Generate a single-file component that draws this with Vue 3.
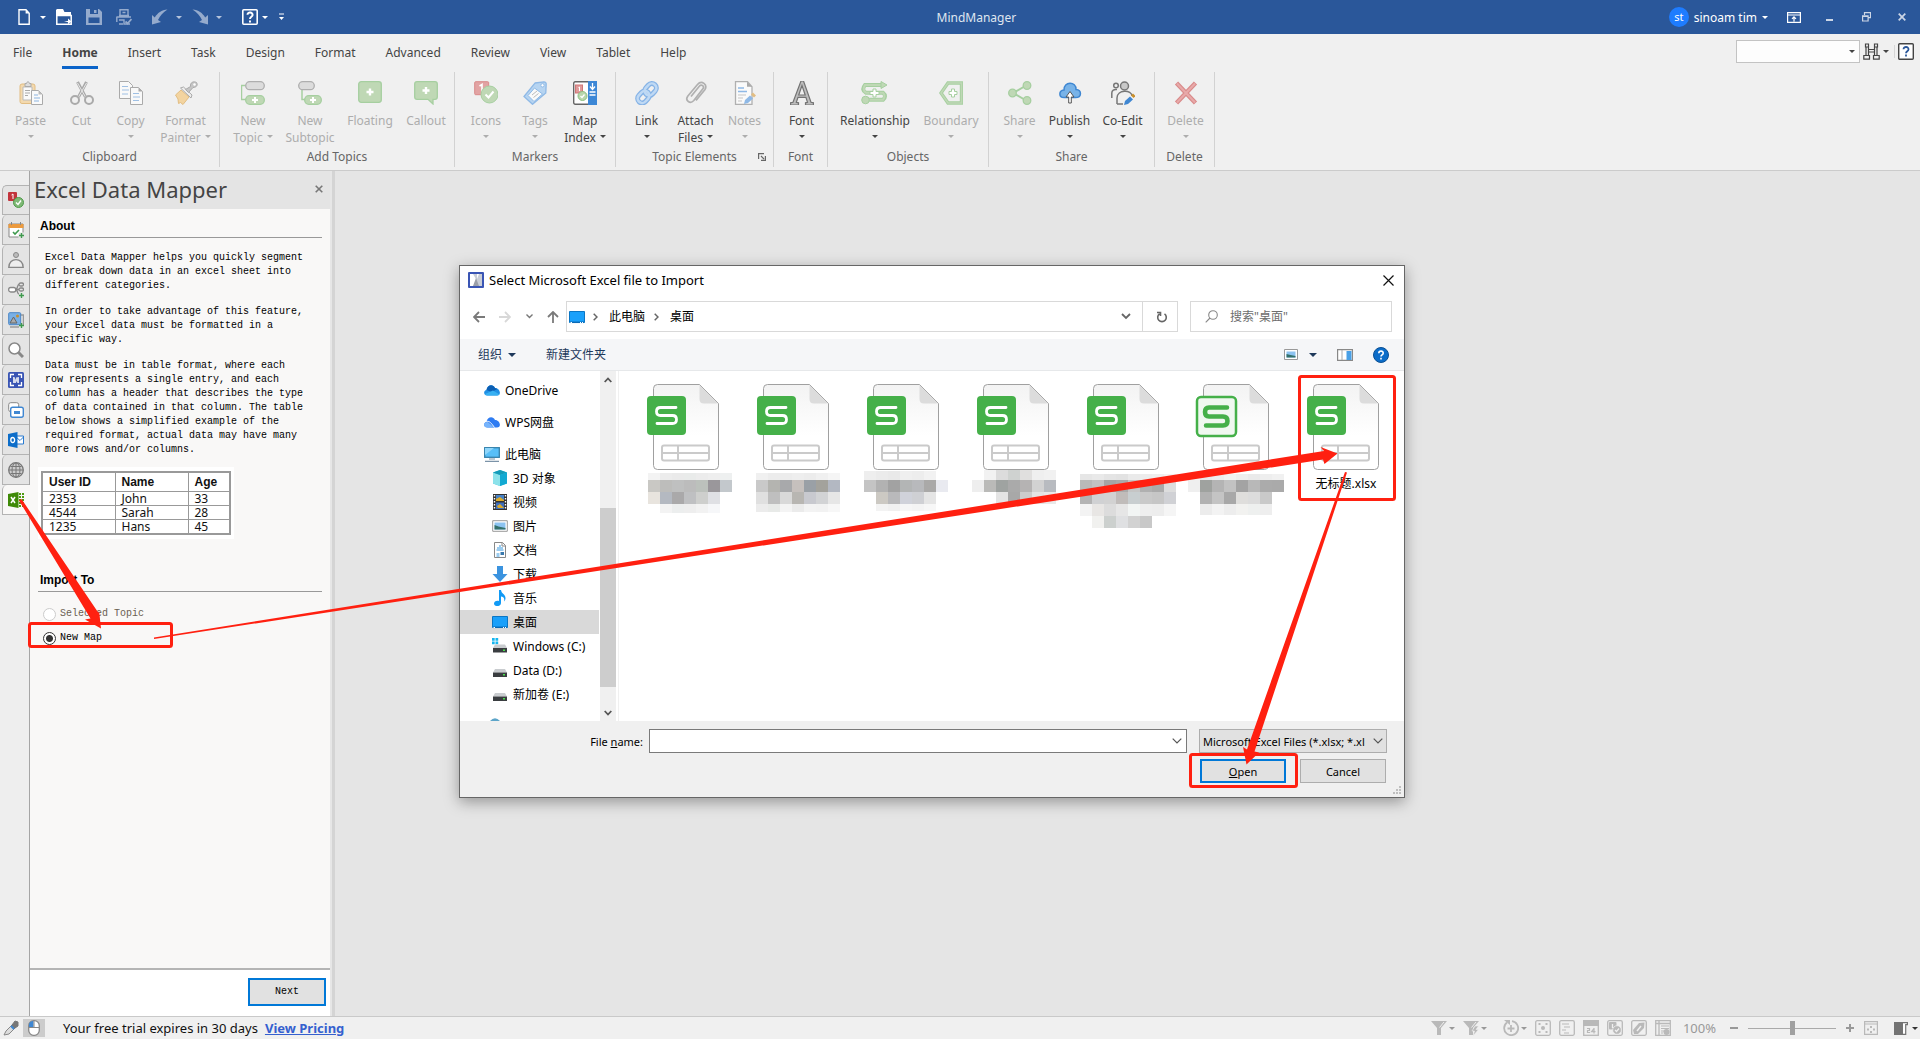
<script setup>
import { ref } from 'vue'

const icons = {
  newDoc: '<path d="M3 .8h7l3.2 3.4v11H3z" fill="none" stroke="#fff" stroke-width="1.4"/><path d="M9.6 1v3.6h3.6" fill="#fff"/>',
  folder: '<path d="M1 0h6l1.500 3H15v4H0V1z" fill="#fff"/><path d="M.8 6.500h14.400v8.700H.8z" fill="none" stroke="#fff" stroke-width="1.500"/><path d="M8 12h4V9.500l3.500 2.900-3.500 2.900v-2z" fill="#fff"/>',
  save: '<path d="M0 0h13l3 3v13H0z" fill="#95abcd"/><path d="M4 0h8v5H4zM2.500 8.500h11V14h-11z" fill="#2a579a"/><path d="M8 1h2.500v3H8z" fill="#95abcd"/>',
  print: '<g fill="none" stroke="#95abcd" stroke-width="1.400"><path d="M4 6V.8h8V6M6.500 3.500h3M1 8h14M3 6.500h10M.8 13V7.500M3 11h5v4h6M3 15h4"/><path d="M9.500 12.500l2 2 4-4.500" stroke-width="1.800"/></g>',
  undo: '<path d="M0 15.500V6l2.800 2.400C5.500 4 9.500 1 15.500.5 11 3.500 8 6.800 6 11l3 2z" fill="#95abcd"/>',
  redo: '<path d="M16 15.500V6l-2.800 2.400C10.500 4 6.500 1 .5.5 5 3.500 8 6.800 10 11l-3 2z" fill="#95abcd"/>',
  help: '<rect x=".8" y=".8" width="14.400" height="14.400" rx="1" fill="none" stroke="#fff" stroke-width="1.600"/><path d="M5.500 5.800C5.600 2.600 10.800 2.800 10.600 6c-.1 1.900-2.600 1.800-2.600 4M8 11.400v2" fill="none" stroke="#fff" stroke-width="2"/>',
  paste: '<rect x="1" y="3" width="15" height="19.500" rx="2" fill="#f3d9ae" stroke="#e2bd82"/><path d="M4 6h9v13H4z" fill="#fafafa" stroke="#bbb"/><path d="M6 2.500h1.500C8 .2 10 .2 10.500 2.500H12v3H6z" fill="#ddd" stroke="#aaa"/><path d="M6 9.500h5M6 12h5M6 14.500h3" stroke="#aaa"/><path d="M12.500 9.500h7l4 4v10h-11z" fill="#fafafa" stroke="#aaa"/><path d="M15 14h4M15 17h6M15 20h5" stroke="#8db5e0"/><path d="M19.500 9.500v4h4z" fill="#bbb"/>',
  cut: '<path d="M7.500 1l8 15M16.500 1l-8 15" stroke="#a9a9a9" stroke-width="3"/><path d="M7.500 2l8 14M16.500 2l-8 14" stroke="#e6e6e6"/><circle cx="5" cy="19" r="4" fill="none" stroke="#aaa" stroke-width="2"/><circle cx="19" cy="19" r="4" fill="none" stroke="#aaa" stroke-width="2"/>',
  copy: '<path d="M.5.5h9l4 4v13H.5z" fill="#f9f9f9" stroke="#aaa"/><path d="M3 5.500h6M3 9h7M3 13h6" stroke="#9fc0e4"/><path d="M11.500 6.500h8l4 4v13h-12z" fill="#f9f9f9" stroke="#aaa"/><path d="M14 12.500h6M14 16h7M14 19.500h6" stroke="#9fc0e4"/><path d="M19.500 6.500v4h4z" fill="#aaa"/>',
  painter: '<path d="M1.500 14L7 9l8 7-6 7.500-2.500-2-2 1L4 18z" fill="#f3d4a0" stroke="#e2bd82"/><path d="M6.500 7l3-1 8.500 8-1 3z" fill="#eee" stroke="#aaa"/><path d="M11.500 8.500l5-3C16 1 20 0 22.500 1.500c1.500 2 .5 5-3.500 5l-4.500 5z" fill="#c5c5c5" stroke="#aaa"/><circle cx="20.500" cy="3.500" r="1.200" fill="#fff"/>',
  newTopic: '<path d="M4.500 4.500h-4v14h5" fill="none" stroke="#a6cfa0" stroke-width="1.500"/><rect x="4.700" y=".7" width="18.600" height="8" rx="4" fill="#dcdcdc" stroke="#aeaeae" stroke-width="1.300"/><rect x="4.700" y="14.700" width="18.600" height="8.600" rx="4" fill="#bfd8b5" stroke="#a6cfa0" stroke-width="1.300"/><path d="M14 16v6M11 19h6" stroke="#fff" stroke-width="2"/>',
  subTopic: '<path d="M4 8v10.500h4" fill="none" stroke="#a6cfa0" stroke-width="1.500"/><rect x=".7" y=".7" width="15.600" height="8" rx="4" fill="#dcdcdc" stroke="#aeaeae" stroke-width="1.300"/><rect x="6.700" y="14.700" width="16.600" height="8.600" rx="4" fill="#bfd8b5" stroke="#a6cfa0" stroke-width="1.300"/><path d="M15 16v6M12 19h6" stroke="#fff" stroke-width="2"/>',
  floating: '<rect x=".7" y=".7" width="22.600" height="20.600" rx="2.500" fill="#bfd8b5" stroke="#a6cfa0" stroke-width="1.300"/><path d="M12 7.500v7M8.500 11h7" stroke="#fff" stroke-width="2.400"/>',
  callout: '<path d="M3 .7h18q2.300 0 2.300 2.300v13q0 2.300-2.300 2.300h-2V23l-5-4.700H3Q.7 18.300.7 16V3Q.7.700 3 .7z" fill="#bfd8b5" stroke="#a6cfa0" stroke-width="1.300"/><path d="M12 6v7M8.500 9.500h7" stroke="#fff" stroke-width="2.400"/>',
  iconsI: '<rect x=".7" y=".7" width="14" height="13" rx="1" fill="#e2a3a3" stroke="#d98b8b"/><path d="M5.500 5l2.500-1.500V11" fill="none" stroke="#fff" stroke-width="1.600"/><circle cx="15.500" cy="13.500" r="8.500" fill="#bfd8b5" stroke="#a6cfa0"/><path d="M11.500 13.500l3 3 5-6" fill="none" stroke="#fff" stroke-width="2"/>',
  tags: '<path d="M12 2L21 .8q2 0 2.200 2L22.800 12 9.500 23.300 1 15.500z" fill="#b6d4f1" stroke="#8fb9e6" stroke-width="1.300"/><path d="M11.500 7l8 6-8.500 7.500L5 14.500z" fill="#fafafa" stroke="#8fb9e6"/><circle cx="19.500" cy="4.300" r="1.700" fill="#fff" stroke="#8fb9e6"/><path d="M9 14l5-4M10.500 16.500l5-4" stroke="#bbb"/>',
  mapIndex: '<rect x=".7" y=".7" width="22.600" height="22.600" rx="1.500" fill="#fff" stroke="#666" stroke-width="1.400"/><path d="M15 0h9v24h-9z" fill="#3c87d6"/><path d="M19.500 2v6M17 5.500l2.500 3 2.500-3M16.500 11h6M16.500 14h6" fill="none" stroke="#fff" stroke-width="1.300"/><rect x="2.500" y="4" width="7" height="8" fill="#e09a9a" stroke="#cf7777"/><path d="M5.500 6.500L6.500 6v4" fill="none" stroke="#fff"/><circle cx="9.500" cy="15" r="4.500" fill="#b9d6ad" stroke="#8dc083"/><path d="M7.500 15l1.500 1.500 2.500-3" fill="none" stroke="#fff" stroke-width="1.300"/>',
  link: '<g fill="none" stroke="#86b3e6" stroke-width="5"><rect x="11" y="2" width="9" height="13" rx="4.500" transform="rotate(42 15.500 8.500)"/><rect x="4" y="9.500" width="9" height="13" rx="4.500" transform="rotate(42 8.500 16)"/></g><g fill="none" stroke="#bfd9f4" stroke-width="2.600"><rect x="11" y="2" width="9" height="13" rx="4.500" transform="rotate(42 15.500 8.500)"/><rect x="4" y="9.500" width="9" height="13" rx="4.500" transform="rotate(42 8.500 16)"/></g>',
  attach: '<path d="M7 15.500L15.500 5c2-2.300 5.200.3 3.400 2.700L9.800 19.500c-3.600 4-9 .2-6.100-4.300L13.500 3.500c4.200-4.800 10.500.2 7.300 5.200L12 19.500" fill="none" stroke="#b0b0b0" stroke-width="1.700"/>',
  notes: '<path d="M2.500.7h12l4.500 5v17.600H2.500z" fill="#fafafa" stroke="#b0b0b0" stroke-width="1.300"/><path d="M14 .7v5h5z" fill="#aaa"/><path d="M5 7h6M5 10.500h9" stroke="#8fb9e6" stroke-width="1.300"/><path d="M5 14h8M5 17h5M5 20h4" stroke="#c5c5c5"/><path d="M11 23l1-4 5-4.500 3 3-5 4.500z" fill="#8fb9e6"/><path d="M18 13.500l2-2 3 3-2 2z" fill="#e2bd82"/>',
  font: '<path d="M11 0h2.500l7.500 21.300 2.500.5V24h-8v-2.200l2-.5-1.600-5H8l-1.700 5 2.200.5V24H.5v-2.200l2.500-.5zm1 4.500L8.700 14h6.500z" fill="#bdbdbd" stroke="#737373" stroke-width="1.200"/>',
  relation: '<path d="M3 18.800h19q4-3.800 0-7H5Q0 9 4 4h18" fill="none" stroke="#a6cfa0" stroke-width="4"/><path d="M5 18.800h17q3-3.800 0-7H5Q1 9 4 4h18" fill="none" stroke="#bfd8b5" stroke-width="2"/><path d="M20 .5l6 3.500-6 3.500z" fill="#bfd8b5" stroke="#a6cfa0"/><circle cx="4.500" cy="19" r="3.800" fill="#bfd8b5" stroke="#a6cfa0"/><path d="M12 8h3v2.500h3v3h-3V16h-3v-2.500H9v-3h3z" fill="#fff" stroke="#a6cfa0"/>',
  boundary: '<path d="M9 2h13.500v20H9L2 12z" fill="none" stroke="#a6cfa0" stroke-width="3.400"/><path d="M9 2h13.500v20H9L2 12z" fill="none" stroke="#bfd8b5" stroke-width="1.500"/><path d="M12.500 8h3v2.500H18v3h-2.500V16h-3v-2.500H10v-3h2.500z" fill="#fff" stroke="#a6cfa0"/>',
  share: '<path d="M5 12L19 4M5 12l14 8" stroke="#a6cfa0" stroke-width="2"/><g fill="#bfd8b5" stroke="#a6cfa0" stroke-width="1.300"><circle cx="4.500" cy="12" r="3.800"/><circle cx="19" cy="4.500" r="3.800"/><circle cx="19" cy="19.500" r="3.800"/></g>',
  publish: '<path d="M6 16.500C.5 16.500.5 9.500 6 9 5.500 0 18.500 0 18 8.500c6 .5 6 8-.5 8z" fill="#78b3e8" stroke="#3f87d2" stroke-width="1.500"/><path d="M10.700 22v-6H8l4-5.500 4 5.500h-2.700v6z" fill="#fff" stroke="#555"/>',
  coedit: '<g fill="none" stroke="#777" stroke-width="1.500"><circle cx="5" cy="4.500" r="2.300"/><path d="M.8 17V12C.8 9.500 3 8 6 8.500M6 23v-6c0-9 15-8.500 15-2M6 23h6"/><circle cx="13.500" cy="5" r="4" fill="#c9c9c9"/></g><path d="M13 24l1-4 5-4.500 3 3-5 4.500z" fill="#3f87d2"/><path d="M20 14.500l2-2 2.500 2.500-2 2z" fill="#c98f2c"/>',
  del: '<path d="M2.500 2l19 20M21.500 2l-19 20" stroke="#d98b8b" stroke-width="4.500"/><path d="M3 2.500l18 19M21 2.500l-18 19" stroke="#e8a9a9" stroke-width="2"/>',
  sIcons: '<rect width="9" height="9" rx="1" fill="#c2343c"/><path d="M3.500 3L5 2v5" fill="none" stroke="#fff"/><circle cx="10.500" cy="10.500" r="5" fill="#7fb976" stroke="#4e9a4a"/><path d="M8 10.500l2 2 3-4" fill="none" stroke="#fff" stroke-width="1.400"/>',
  sTask: '<path d="M1 2h14v13H1z" fill="#fff" stroke="#888"/><path d="M.5 2h15v4H.5z" fill="#ec9b3f"/><path d="M3.500 0v3M12.500 0v3" stroke="#888"/><path d="M5 10l2 2 4-4" fill="none" stroke="#3f9a4e" stroke-width="1.600"/><path d="M10.500 10.500H16V16h-5.500z" fill="#e4e4e4"/><path d="M13.500 11v5M11 13.500h5" stroke="#3f9a4e" stroke-width="1.400"/>',
  sPerson: '<circle cx="8" cy="3" r="2.500" fill="#bbb" stroke="#888"/><path d="M.8 15.500C.8 5 15.200 5 15.200 15.500z" fill="#eee" stroke="#888" stroke-width="1.400"/>',
  sMap: '<g fill="none" stroke="#888" stroke-width="1.300"><rect x=".7" y="5.500" width="7" height="4.500" rx="2" fill="#fff"/><path d="M8 7.500h3M8 7c2 0 1-4.500 3-4.500M8 8c2 0 1 4 3 4"/><rect x="11" y="1" width="4.500" height="3" rx="1.500"/><rect x="11" y="6" width="4.500" height="3" rx="1.500"/></g><path d="M13.500 11v5M11 13.500h5" stroke="#3f9a4e" stroke-width="1.400"/>',
  sImage: '<path d="M3 3h12.500v10M2 15h9" fill="none" stroke="#999" stroke-width="1.500"/><rect x=".7" y=".7" width="12" height="12" rx="1" fill="#79b0e6" stroke="#4b86c6"/><path d="M2 11l3.500-6L9 11z" fill="#aaa" stroke="#666"/><circle cx="9.500" cy="4" r="1.500" fill="#c98f2c"/><path d="M13.500 11v5M11 13.500h5" stroke="#3f9a4e" stroke-width="1.400"/>',
  sSearch: '<path d="M10 10l5 5" stroke="#888" stroke-width="3"/><circle cx="6.500" cy="6.500" r="5.500" fill="#fff" stroke="#888" stroke-width="1.500"/>',
  sSnap: '<rect width="16" height="16" rx="1.500" fill="#3a55b4"/><path d="M2.500 6V2.500H6M10 2.500h3.500V6M13.500 10v3.500H10M6 13.500H2.500V10" fill="none" stroke="#fff" stroke-width="1.300"/><path d="M5 5h1.500L8 8V5.500L11 5v6H9.500L8 9v2H5z" fill="#d5daea"/>',
  sLib: '<rect x=".7" y=".7" width="10" height="9" rx="2" fill="#fff" stroke="#888"/><rect x="2.700" y="5.200" width="12.600" height="10" rx="2" fill="#fff" stroke="#3f87d2" stroke-width="1.400"/><path d="M6 9h6v3H6z" fill="#3f87d2"/>',
  sOutlook: '<path d="M8 4h7.500v8H8z" fill="#fff" stroke="#2a7bd0"/><path d="M8 5l4 3.500L15.500 5" fill="none" stroke="#2a7bd0"/><path d="M0 2l9.500-2v16L0 14z" fill="#0c6dc9"/><ellipse cx="4.700" cy="8" rx="1.900" ry="2.500" fill="none" stroke="#fff" stroke-width="1.300"/>',
  sWeb: '<circle cx="8" cy="8" r="7.300" fill="#ccc" stroke="#777" stroke-width="1.300"/><path d="M8 1v14M1 8h14M2.500 4.500h11M2.500 11.500h11" stroke="#777"/><ellipse cx="8" cy="8" rx="4" ry="7" fill="none" stroke="#777"/>',
  sExcel: '<path d="M11 2h5M11 5h5M11 8h5M11 11h5M11 14h5" stroke="#4f9a12" stroke-width="2" stroke-dasharray="2 1"/><path d="M0 2l10.500-2v16L0 14z" fill="#3f8a08"/><path d="M3 5l4 6M7 5l-4 6" stroke="#fff" stroke-width="1.500"/>',
  cloud: '<path d="M3.500 13.500C-.8 13.500-.8 8.500 2.500 8 3 3 9 1.500 11 6c5 0 7 7.500 2 7.500z" fill="#1f8fe4"/><path d="M2.500 8C3 3 9 1.500 11 6l2.500 1-6 3z" fill="#0b5fb4"/><path d="M1 12l8-3.500 6.500 4q-1 1-2.500 1H3.500Q1.500 13.500 1 12z" fill="#37b0f2"/>',
  wps: '<path d="M3.500 13.500C-.8 13.500-.8 8.500 2.500 8 3 3 9 1.500 11 6c5 0 7 7.500 2 7.500z" fill="#2e7cf2"/><path d="M0 11c0-2 2-3.500 4-3l6 5.500H3.500Q.5 13.500 0 11z" fill="#77b4fb"/><path d="M2.500 7.500c3-1 5 2 8 6" fill="none" stroke="#fff"/>',
  pc: '<rect x=".7" y="1.700" width="14.600" height="9.600" fill="#58bff8" stroke="#3480ab" stroke-width="1.300"/><path d="M1 9L10 2H1z" fill="#8fd6fb"/><path d="M5 13h6M1 15.300h14" stroke="#7b93a8" stroke-width="1.200"/>',
  cube: '<path d="M8 0l7 2.500v11L8 16l-7-2.500v-11z" fill="#35bfd8"/><path d="M1 2.500L8 5v11l-7-2.500z" fill="#8ce2ea"/><path d="M8 0l7 2.500L8 5 1 2.500z" fill="#149bb8"/><path d="M8 5l7-2.500v11L8 16z" fill="#12a9d2"/>',
  video: '<path d="M1 0h14v16H1z" fill="#333"/><path d="M4 1h8v6H4z" fill="#4581c6"/><path d="M4 8.500h8V15H4z" fill="#3e6fbd"/><path d="M4 5l4-2 4 3v1H4zM5 12l3-2 4 4H6z" fill="#dbaa2a"/><path d="M2.500 1v15M13.500 1v15" stroke="#fff" stroke-width="1.400" stroke-dasharray="1.500 1.500"/>',
  picture: '<path d="M.7 2.700h14.600v10.600H.7z" fill="#fff" stroke="#999"/><path d="M2.500 4.500h11v7h-11z" fill="#8cc3f1"/><path d="M2.500 7l4 1.500 7 1.500v1.500h-11z" fill="#33706b"/>',
  document: '<path d="M2.500.5h8l3 3v12h-11z" fill="#fff" stroke="#888"/><path d="M10 .5v3.500h3.500" fill="none" stroke="#888"/><path d="M7 4h2M5 6h6M4.500 8h7M4.500 12h3M4.500 14h3" stroke="#3798df"/><path d="M8.500 10h3.500v3H8.500z" fill="#3a79ad"/>',
  download: '<path d="M5 0h6v8h4.500L8 16 .5 8H5z" fill="#3b93df"/>',
  music: '<path d="M7 0h2c.5 4 4.500 4 4.500 8 0 1.500-.5 2.500-1.500 3.500 1-4-1-4.500-3-5V13c0 4-7 4-7 .5 0-2 2.500-3.500 5-2.500z" fill="#119af5"/>',
  desktop: '<path d="M.5 2.500h15v11H.5z" fill="#1aa0fa" stroke="#0b76c4"/><path d="M1 13.300h14" stroke="#0a6ab5" stroke-width="1.500"/><path d="M1.500 13.500h1.500M11 13.500h1M13 13.500h1" stroke="#fff"/>',
  diskWin: '<path d="M0 0h2.700v2.700H0zM3.500 0h2.700v2.700H3.500zM0 3.500h2.700v2.700H0zM3.500 3.500h2.700v2.700H3.500z" fill="#17b6ef"/><path d="M3 6.500h10l2 3.500H1z" fill="#c9cccf"/><path d="M1 10h14v4.500H1z" fill="#3a3d40"/><path d="M11 12.300h2" stroke="#49e04c" stroke-width="1.500"/>',
  disk: '<path d="M3 7h10l2 3.500H1z" fill="#c9cccf"/><path d="M1 10.500h14V15H1z" fill="#3a3d40"/><path d="M11 12.800h2" stroke="#49e04c" stroke-width="1.500"/>',
  filter: '<path d="M0 1h16L10 8v7H6V8z" fill="#b9b9b9"/><path d="M13 2L8.500 7.500" stroke="#f0f0f0"/>',
  filterFlash: '<path d="M0 1h16L10 8v7H6V8z" fill="#b9b9b9"/><path d="M13 2L8.500 7.500" stroke="#f0f0f0"/><path d="M12 6l-3 5h2.500L10 16l5.500-6.500H13L15.500 6z" fill="#b9b9b9" stroke="#f0f0f0" stroke-width=".6"/>',
  addCircle: '<path d="M4 2.500a7 7 0 1 0 5-1.300M8 5v7M4.500 8.500h7" fill="none" stroke="#b9b9b9" stroke-width="1.800"/><path d="M1 0h6v5z" fill="#b9b9b9"/>',
  vMap: '<rect x=".7" y=".7" width="14.600" height="14.600" rx="1.500" fill="none" stroke="#b9b9b9" stroke-width="1.300"/><circle cx="8" cy="8" r="2" fill="#b9b9b9"/><path d="M3.500 4h2M10.500 4h2M3.500 12h2M10.500 12h2" stroke="#b9b9b9" stroke-width="2"/>',
  vOutline: '<rect x=".7" y=".7" width="14.600" height="14.600" rx="1.500" fill="none" stroke="#b9b9b9" stroke-width="1.300"/><path d="M3 4h7M5 7h6M3 10h4M5 13h5" stroke="#b9b9b9" stroke-width="1.200"/>',
  vTag: '<rect x=".7" y=".7" width="14.600" height="14.600" rx="1.500" fill="none" stroke="#b9b9b9" stroke-width="1.300"/><path d="M2 10l6-7 5.500-.5L13 8l-6 6H3z" fill="#b9b9b9"/><path d="M6 11l4-5" stroke="#f0f0f0" stroke-width="1.500"/>',
  vIcons: '<rect x=".7" y=".7" width="14.600" height="14.600" rx="1.500" fill="none" stroke="#b9b9b9" stroke-width="1.300"/><rect x="2" y="2" width="7.500" height="7.500" rx="1" fill="#b9b9b9"/><circle cx="10" cy="10" r="4.300" fill="#b9b9b9" stroke="#f0f0f0" stroke-width=".7"/><path d="M8 10l1.500 1.500 2.500-3M5.500 4v4" fill="none" stroke="#f0f0f0" stroke-width="1.300"/>',
  vCal: '<rect x=".7" y=".7" width="14.600" height="14.600" fill="none" stroke="#b9b9b9" stroke-width="1.300"/><path d="M0 0h16v6H0z" fill="#b9b9b9"/><path d="M4 8.500h2.500v2H4.500v2H7M11 8v5.500M12.500 11.700h-4L11 8.500" fill="none" stroke="#b9b9b9" stroke-width="1.200"/>',
  vGantt: '<path d="M.7.7h14.600v14.600H.7zM.7 3.500h14.600M4 1v14" fill="none" stroke="#b9b9b9" stroke-width="1.300"/><path d="M6 6h8M6 8.500h8M6 11h3M6 13h2" stroke="#b9b9b9"/><circle cx="11.500" cy="12" r="3" fill="#b9b9b9"/>',
}

const tabs = ['File', 'Home', 'Insert', 'Task', 'Design', 'Format', 'Advanced', 'Review', 'View', 'Tablet', 'Help']

const groups = [
  { name: 'Clipboard', width: 220, items: [
    { icon: 'paste', lines: ['Paste'], width: 52, caret: true },
    { icon: 'cut', lines: ['Cut'], width: 50 },
    { icon: 'copy', lines: ['Copy'], width: 48, caret: true },
    { icon: 'painter', lines: ['Format', 'Painter'], width: 62, caret: true },
  ] },
  { name: 'Add Topics', width: 235, items: [
    { icon: 'newTopic', lines: ['New', 'Topic'], width: 56, caret: true },
    { icon: 'subTopic', lines: ['New', 'Subtopic'], width: 58 },
    { icon: 'floating', lines: ['Floating'], width: 62 },
    { icon: 'callout', lines: ['Callout'], width: 50 },
  ] },
  { name: 'Markers', width: 161, items: [
    { icon: 'iconsI', lines: ['Icons'], width: 50, caret: true },
    { icon: 'tags', lines: ['Tags'], width: 48, caret: true },
    { icon: 'mapIndex', lines: ['Map', 'Index'], width: 52, caret: true, on: true },
  ] },
  { name: 'Topic Elements', width: 158, launcher: true, items: [
    { icon: 'link', lines: ['Link'], width: 48, caret: true, on: true },
    { icon: 'attach', lines: ['Attach', 'Files'], width: 50, caret: true, on: true },
    { icon: 'notes', lines: ['Notes'], width: 48, caret: true },
  ] },
  { name: 'Font', width: 54, items: [{ icon: 'font', lines: ['Font'], width: 48, caret: true, on: true }] },
  { name: 'Objects', width: 161, items: [
    { icon: 'relation', lines: ['Relationship'], width: 84, caret: true, on: true, wide: true },
    { icon: 'boundary', lines: ['Boundary'], width: 68, caret: true },
  ] },
  { name: 'Share', width: 166, items: [
    { icon: 'share', lines: ['Share'], width: 52, caret: true },
    { icon: 'publish', lines: ['Publish'], width: 48, caret: true, on: true },
    { icon: 'coedit', lines: ['Co-Edit'], width: 58, caret: true, on: true },
  ] },
  { name: 'Delete', width: 60, items: [{ icon: 'del', lines: ['Delete'], width: 50, caret: true }] },
]

const sideTabs = [
  ['sIcons', 'Icons'], ['sTask', 'Task info'], ['sPerson', 'Resources'], ['sMap', 'Map parts'],
  ['sImage', 'Images'], ['sSearch', 'Search'], ['sSnap', 'Snap'], ['sLib', 'Library'],
  ['sOutlook', 'Outlook'], ['sWeb', 'Browser'], ['sExcel', 'Excel Data Mapper'],
]

const people = [['2353', 'John', '33'], ['4544', 'Sarah', '28'], ['1235', 'Hans', '45']]

const places = [
  { icon: 'cloud', name: 'OneDrive', root: true },
  { icon: 'wps', name: 'WPS网盘', root: true },
  { icon: 'pc', name: '此电脑', root: true },
  { icon: 'cube', name: '3D 对象' },
  { icon: 'video', name: '视频' },
  { icon: 'picture', name: '图片' },
  { icon: 'document', name: '文档' },
  { icon: 'download', name: '下载' },
  { icon: 'music', name: '音乐' },
  { icon: 'desktop', name: '桌面', current: true },
  { icon: 'diskWin', name: 'Windows (C:)' },
  { icon: 'disk', name: 'Data (D:)' },
  { icon: 'disk', name: '新加卷 (E:)' },
]

// Redacted names: each row is [x, y, height, list of 12px cells].
const files = [
  { mosaic: [
    [17, 3, 7, ['#f3f3f3', '#ececec', '#eaeaea', '#e9ebea', '#ececec', '#eeeeee', '#eef0f0']],
    [17, 10, 12, ['#c9c8c4', '#bdbdbb', '#bfc0c0', '#bcbcbc', '#bcc1bc', '#9a979b', '#c3c8cc']],
    [17, 22, 12, ['#e8e4de', '#b4b9c1', '#aaa9aa', '#bfc0c2', '#cecfcd', '#dfe0e4']],
    [29, 34, 9, ['#f3f3f3', '#eceeee', '#eeeeee', '#f2f2f2', '#f6f7f9']],
  ] },
  { mosaic: [
    [15, 3, 7, ['#f0f0f0', '#ececec', '#ececec', '#eeeeee', '#ececec', '#f0f0f0', '#f5f5f5']],
    [15, 10, 12, ['#c9c9c9', '#b4b4b0', '#a8a9ab', '#c6c0bd', '#9aa0a6', '#a3a29c', '#b3b8c2']],
    [15, 22, 12, ['#e0e0e0', '#bfbfbf', '#d9d9d9', '#b8b6b2', '#c8c9cf', '#d2d3d5', '#e6e6e6']],
    [15, 34, 8, ['#ececec', '#e8eae8', '#f4f4f4', '#ebebeb', '#f3f3f3', '#f2f2f2', '#f7f7f7']],
  ] },
  { mosaic: [
    [13, 1, 9, ['#eeeeee', '#ebebeb', '#e9e9e9', '#efefef', '#ededed', '#f2f2f2']],
    [13, 10, 12, ['#c4c4c4', '#b2b2b2', '#a2a2a2', '#b3b5b5', '#b8b9bc', '#aaa9a8', '#e9eaf0']],
    [25, 22, 12, ['#ccc9c3', '#b9b9bb', '#d0d2da', '#cfd0d4', '#e5e5e5']],
    [25, 34, 7, ['#f3f3f3', '#f0f0f0', '#f6f6f6', '#f4f4f4', '#f7f7f7']],
  ] },
  { mosaic: [
    [23, 0, 10, ['#f2f2f2', '#dcdcdc', '#cfd2d0', '#e0dfde', '#efefef', '#f1f1f1']],
    [11, 10, 12, ['#eeeeee', '#babab8', '#9fa3a1', '#aaaaaa', '#b5b3b3', '#d2d2d2', '#b8bbc0']],
    [35, 22, 12, ['#e4e4e4', '#a8a8a8', '#cccccc', '#e4e4e4', '#e9e9e9']],
  ] },
  { mosaic: [
    [9, 4, 6, ['#e6e6e6', '#e9e9e9', '#e4e4e4', '#e2e2e2', '#eaeaea', '#ececec', '#eeeeee', '#f3f3f3']],
    [9, 10, 12, ['#b9b9b9', '#c2c2c2', '#a5a5a5', '#aaaaaa', '#c5c5c5', '#b0b0b0', '#aaaaaa', '#dddddd']],
    [9, 22, 12, ['#b3b3b3', '#d0d1d3', '#d2d2d2', '#c0bcba', '#c8ced0', '#c9c9c9', '#c6c6c6', '#d0d1d5']],
    [9, 34, 12, ['#f3f3f3', '#e8e6e4', '#dcdcdc', '#e6e6e6', '#f2f5f4', '#eeeeee', '#ededed', '#f5f5f5']],
    [21, 46, 12, ['#f1f1ef', '#ccd0ce', '#dfe0e2', '#d2d2d2', '#c8c8c8']],
  ] },
  { outline: true, mosaic: [
    [7, 4, 6, ['#f4f4f4', '#e9e9e9', '#ededed', '#f2f2f2', '#eeeeee', '#eaeaea', '#eeeeee', '#f1f1f1']],
    [7, 10, 12, ['#efefef', '#9fa29f', '#b4b4b4', '#c2c2c2', '#a3a3a3', '#b8b8b8', '#ababab', '#aaaaaa']],
    [19, 22, 12, ['#b2b2b2', '#c4c4c4', '#a8a8a8', '#dfdedc', '#dcdcdc', '#c9c9c9']],
    [19, 34, 11, ['#ececec', '#f3f3f3', '#ededed', '#f2f2f0', '#eef0ef', '#eeeeee']],
  ] },
  { name: '无标题.xlsx' },
]

const target = ref('new')
const find = ref('')
const search = ref('')
const fileName = ref('')
</script>

<template>
  <div class="app">
    <header class="titlebar">
      <div class="quick">
        <button class="plain" aria-label="New"><svg width="16" height="16" v-html="icons.newDoc" /><i class="caret" /></button>
        <div class="trio">
          <button class="plain" aria-label="Open file"><svg width="16" height="16" v-html="icons.folder" /></button>
          <button class="plain" aria-label="Save"><svg width="16" height="16" v-html="icons.save" /></button>
          <button class="plain" aria-label="Print"><svg width="16" height="16" v-html="icons.print" /></button>
        </div>
        <span class="bar" />
        <button class="plain dim" aria-label="Undo"><svg width="16" height="16" v-html="icons.undo" /><i class="caret" /></button>
        <button class="plain dim" aria-label="Redo"><svg width="16" height="16" v-html="icons.redo" /><i class="caret" /></button>
        <span class="bar" />
        <button class="plain" aria-label="Help"><svg width="16" height="16" v-html="icons.help" /><i class="caret near" /></button>
        <button class="plain" aria-label="Customize"><svg width="7" height="8"><path d="M1 1h5" stroke="#fff" /><path d="M1 4h5L3.500 7z" fill="#fff" /></svg></button>
      </div>
      <h1>MindManager</h1>
      <div class="session">
        <button class="plain user"><span class="avatar">st</span>sinoam tim<i class="caret" /></button>
        <button class="plain win" aria-label="Ribbon display"><svg width="14" height="11"><path d="M.6.6h12.800v9.800H.6zM.6 3h12.800M7 9.500V5M5 6.800L7 4.800l2 2" fill="none" stroke="#fff" stroke-width="1.200" /></svg></button>
        <button class="plain win" aria-label="Minimize"><svg width="8" height="10"><path d="M0 8h7" stroke="#ccd6e6" stroke-width="2" /></svg></button>
        <button class="plain win" aria-label="Restore"><svg width="9" height="10"><path d="M2.500 3V.6h6v5H6.300M.6 3.800h5.500v5.200H.6zM.6 4.300h5.500" fill="none" stroke="#ccd6e6" stroke-width="1.200" /></svg></button>
        <button class="plain win" aria-label="Close"><svg width="8" height="8"><path d="M.7.7l6.600 6.600M7.300.7L.7 7.300" stroke="#ccd6e6" stroke-width="1.700" /></svg></button>
      </div>
    </header>

    <nav class="tabs">
      <button v-for="t in tabs" :key="t" :class="['tab', { active: t === 'Home' }]">{{ t }}</button>
      <div class="find">
        <div class="findbox"><input v-model="find" type="text" aria-label="Find"><i class="caret" /></div>
        <button class="plain" aria-label="Binoculars"><svg width="17" height="17"><path d="M2.500 1h3v3h-3zM11.500 1h3v3h-3zM3 4v8.500M5.500 4v8.500M11.500 4v8.500M14 4v8.500M5.500 6.500h6M5.500 9h6M.8 12.500h5.700v3.700H.8zM10.500 12.500h5.700v3.700h-5.700z" fill="none" stroke="#444" stroke-width="1.200" /></svg><i class="caret" /></button>
        <span class="bar" />
        <button class="plain" aria-label="Support"><svg width="16" height="17"><rect x=".7" y=".7" width="14.600" height="15.600" rx="1" fill="#fff" stroke="#444" stroke-width="1.400" /><path d="M5.500 6.300c.1-3.200 5.200-3 5 .2-.1 1.900-2.500 1.800-2.500 3.800M8 11.500v2" fill="none" stroke="#2a579a" stroke-width="1.800" /></svg></button>
      </div>
    </nav>

    <section class="ribbon">
      <div v-for="g in groups" :key="g.name" class="group" :style="{ width: g.width + 'px' }">
        <div class="tools">
          <button v-for="it in g.items" :key="it.icon" :class="['tool', { on: it.on }]" :style="{ width: it.width + 'px' }">
            <svg :width="it.wide ? 28 : 24" height="24" v-html="icons[it.icon]" />
            <span class="cap">{{ it.lines[0] }}</span>
            <span v-if="it.lines[1]" class="cap">{{ it.lines[1] }}<i v-if="it.caret" class="caret" /></span>
            <i v-else-if="it.caret" class="caret" />
          </button>
        </div>
        <div class="gname">
          {{ g.name }}
          <svg v-if="g.launcher" class="launcher" width="8" height="8"><path d="M.6 6V.6H6M3 3l3 3M7.400 3v4.400H3" fill="none" stroke="#666" stroke-width="1.200" /></svg>
        </div>
      </div>
    </section>

    <main class="work">
      <aside class="strip">
        <button v-for="(s, i) in sideTabs" :key="s[0]" :class="['stab', { active: i === 10 }]" :aria-label="s[1]">
          <svg width="16" height="16" v-html="icons[s[0]]" />
        </button>
      </aside>

      <section class="pane">
        <header class="pane-head">
          <h2>Excel Data Mapper</h2>
          <button class="plain" aria-label="Close pane"><svg width="8" height="8"><path d="M.7.7l6.600 6.600M7.300.7L.7 7.300" stroke="#777" stroke-width="1.600" /></svg></button>
        </header>
        <div class="pane-body">
          <h3>About</h3>
          <div class="about">
            <p>Excel Data Mapper helps you quickly segment<br>or break down data in an excel sheet into<br>different categories.</p>
            <p>In order to take advantage of this feature,<br>your Excel data must be formatted in a<br>specific way.</p>
            <p>Data must be in table format, where each<br>row represents a single entry, and each<br>column has a header that describes the type<br>of data contained in that column. The table<br>below shows a simplified example of the<br>required format, actual data may have many<br>more rows and/or columns.</p>
          </div>
          <div class="sample">
            <table>
              <thead><tr><th>User ID</th><th>Name</th><th>Age</th></tr></thead>
              <tbody><tr v-for="p in people" :key="p[0]"><td v-for="c in p" :key="c">{{ c }}</td></tr></tbody>
            </table>
          </div>
          <h3>Import To</h3>
          <div class="radios">
            <label class="off"><input v-model="target" type="radio" name="target" value="topic" disabled>Selected Topic</label>
            <label><input v-model="target" type="radio" name="target" value="new">New Map</label>
          </div>
        </div>
        <footer class="pane-foot"><button class="next">Next</button></footer>
      </section>
      <div class="splitter" />
      <div class="canvas" />
    </main>

    <footer class="status">
      <svg class="pen" width="16" height="16"><path d="M1 15l2-4 7-7 3 3-7 7z" fill="#ddd" stroke="#888" /><path d="M8 5l4 4M12 1l3 1v4l-3 2-3-3z" fill="#777" stroke="#777" /><path d="M8 6l3 3" stroke="#3f87d2" stroke-width="2" /></svg>
      <span class="mouse"><svg width="12" height="16"><rect x=".7" y=".7" width="10.600" height="14.600" rx="5" fill="#fff" stroke="#888" stroke-width="1.300" /><path d="M5.500 1v6H1C.5 3 2 1 5.500 1z" fill="#3f87d2" /><path d="M6 1v6.500M1 7.500h10" stroke="#888" /></svg></span>
      <span class="trial">Your free trial expires in 30 days</span>
      <a href="#">View Pricing</a>
      <div class="views">
        <button class="plain" aria-label="Filter"><svg width="16" height="16" v-html="icons.filter" /><i class="caret" /></button>
        <button class="plain" aria-label="Power filter"><svg width="16" height="16" v-html="icons.filterFlash" /><i class="caret" /></button>
        <button class="plain detail" aria-label="Detail"><svg width="16" height="16" v-html="icons.addCircle" /><i class="caret" /></button>
        <button v-for="v in ['vMap', 'vOutline', 'vCal', 'vIcons', 'vTag', 'vGantt']" :key="v" class="plain" :aria-label="v"><svg width="16" height="16" v-html="icons[v]" /></button>
      </div>
      <span class="zoom">100%</span>
      <div class="zoomer">
        <svg width="8" height="8"><path d="M0 4h8" stroke="#999" stroke-width="2" /></svg>
        <input type="range" min="0" max="100" value="50" aria-label="Zoom">
        <svg width="8" height="8"><path d="M0 4h8M4 0v8" stroke="#999" stroke-width="2" /></svg>
      </div>
      <svg width="14" height="14"><path d="M.6.6h12.800v12.800H.6zM.6 3h12.800" fill="none" stroke="#b9b9b9" stroke-width="1.200" /><path d="M7 5v2M7 10v2M3 8.500h2M9 8.500h2" stroke="#b9b9b9" stroke-width="2" /></svg>
      <button class="plain panel" aria-label="Panels"><svg width="14" height="13"><path d="M0 0h9v13H0z" fill="#737373" /><path d="M9 .6h4.400v2h-1.700v9.800H9" fill="#fff" stroke="#737373" stroke-width="1.200" /></svg><i class="caret dark" /></button>
    </footer>

    <div class="dialog" role="dialog" aria-label="Select Microsoft Excel file to Import">
      <div class="dtitle">
        <svg width="16" height="16"><rect width="16" height="16" rx="1" fill="#3a55b4" /><path d="M2 2h12v12H2z" fill="#c9cdd6" /><path d="M2 2h3l3 5v7H2zM9 2h2L9 7z" fill="#fff" /><path d="M8 6l3 8H5z" fill="#9b9fa8" /></svg>
        <span>Select Microsoft Excel file to Import</span>
        <button class="plain" aria-label="Close dialog"><svg width="11" height="11"><path d="M.5.5l10 10M10.500.5l-10 10" stroke="#111" stroke-width="1.200" /></svg></button>
      </div>
      <div class="dnav">
        <div class="arrows">
          <svg width="12" height="12"><path d="M12 6H1.500M6 1L1 6l5 5" fill="none" stroke="#7a7a7a" stroke-width="1.800" /></svg>
          <svg width="12" height="12"><path d="M0 6h10.500M6 1l5 5-5 5" fill="none" stroke="#d8d8d8" stroke-width="1.800" /></svg>
          <svg width="7" height="5"><path d="M.5.5l3 3 3-3" fill="none" stroke="#777" stroke-width="1.400" /></svg>
          <svg width="12" height="12"><path d="M6 12V1.500M1 6l5-5 5 5" fill="none" stroke="#7a7a7a" stroke-width="1.800" /></svg>
        </div>
        <div class="address">
          <svg width="16" height="16" v-html="icons.desktop" />
          <svg width="5" height="8"><path d="M.7.7L4 4 .7 7.300" fill="none" stroke="#666" stroke-width="1.500" /></svg>
          <span>此电脑</span>
          <svg width="5" height="8"><path d="M.7.7L4 4 .7 7.300" fill="none" stroke="#666" stroke-width="1.500" /></svg>
          <span>桌面</span>
          <svg class="drop" width="10" height="7"><path d="M1 1l4 4 4-4" fill="none" stroke="#666" stroke-width="1.800" /></svg>
          <button class="refresh" aria-label="Refresh"><svg width="12" height="12"><path d="M3.500 2.800A4.300 4.300 0 1 0 8.500 2.800M1 1.500h3.500V5" fill="none" stroke="#666" stroke-width="1.600" /></svg></button>
        </div>
        <div class="searchbox">
          <svg width="13" height="13"><circle cx="8" cy="5" r="4.300" fill="none" stroke="#888" stroke-width="1.100" /><path d="M5 8L.7 12.300" stroke="#888" stroke-width="1.100" /></svg>
          <input v-model="search" type="text" aria-label="Search" placeholder="搜索&quot;桌面&quot;">
        </div>
      </div>
      <div class="dtools">
        <button class="plain">组织<i class="caret" /></button>
        <button class="plain">新建文件夹</button>
        <div class="dview">
          <button class="plain" aria-label="View mode"><svg width="14" height="11"><path d="M.5.5h13v10H.5z" fill="#fff" stroke="#999" /><path d="M2.500 2.500h9v6h-9z" fill="#8cc3f1" /><path d="M2.500 5l4 1 5 1v1.500h-9z" fill="#33706b" /></svg><i class="caret" /></button>
          <button class="plain" aria-label="Preview pane"><svg width="16" height="12"><path d="M.6.6h14.800v10.800H.6z" fill="#fff" stroke="#888" stroke-width="1.200" /><path d="M9.500 2h5v9h-5z" fill="#49a0e6" /><path d="M5 1v10" stroke="#aaa" /></svg></button>
          <button class="plain" aria-label="Dialog help"><svg width="16" height="16"><circle cx="8" cy="8" r="7.500" fill="#0c6dc9" stroke="#0a4f93" /><path d="M5.800 6.200c.1-2.900 4.600-2.700 4.400.1-.1 1.700-2.200 1.600-2.200 3.200M8 10.800v1.700" fill="none" stroke="#fff" stroke-width="1.600" /></svg></button>
        </div>
      </div>
      <div class="dbody">
        <ul class="tree">
          <li v-for="p in places" :key="p.name" :class="{ root: p.root, current: p.current }">
            <svg width="16" height="16" v-html="icons[p.icon]" />{{ p.name }}
          </li>
          <li class="peek"><svg width="10" height="3"><path d="M0 3Q5-2.500 10 3z" fill="#5da5c9" /></svg></li>
        </ul>
        <div class="scroll">
          <svg width="8" height="6"><path d="M.7 5L4 1.500 7.300 5" fill="none" stroke="#555" stroke-width="1.800" /></svg>
          <span class="thumb" />
          <svg width="8" height="6"><path d="M.7 1L4 4.500 7.300 1" fill="none" stroke="#555" stroke-width="1.800" /></svg>
        </div>
        <div class="files">
          <div v-for="(f, i) in files" :key="i" class="file">
            <svg width="110" height="90">
              <defs><linearGradient id="paper" x1="0" y1="0" x2="0" y2="1"><stop offset="0" stop-color="#f3f3f3" /><stop offset=".6" stop-color="#fff" /></linearGradient></defs>
              <path d="M26.500.5h42l19 19v62q0 4-4 4h-57q-4 0-4-4v-77q0-4 4-4z" fill="url(#paper)" stroke="#a0a0a0" />
              <path d="M68.500 1l18.500 18.500H73q-4.500 0-4.500-4.500z" fill="#dcdcdc" />
              <path d="M33 61.500h43q2 0 2 2v11q0 2-2 2H33q-2 0-2-2v-11q0-2 2-2zM31 69h47M47 61.500v15" fill="none" stroke="#cacaca" stroke-width="2" />
              <template v-if="f.outline">
                <rect x="16" y="13" width="39" height="39" rx="4" fill="#f0f8f0" stroke="#45b049" stroke-width="2.500" />
                <path d="M46 23.500H28q-4 0-4 4.500t4 4.500h14q4.500 0 4.500 4.500T42 41.500H25" fill="none" stroke="#45b049" stroke-width="4.500" stroke-linecap="round" />
              </template>
              <template v-else>
                <rect x="16" y="12" width="39" height="39" rx="4" fill="#45b049" />
                <path d="M45 23.500H29.500q-4 0-4 4t4 4h12q4 0 4 4t-4 4H26" fill="none" stroke="#fff" stroke-width="2.800" stroke-linecap="round" />
              </template>
            </svg>
            <span v-if="f.name" class="fname">{{ f.name }}</span>
            <svg v-else class="mosaic" width="110" height="60">
              <template v-for="(r, n) in f.mosaic" :key="n">
                <rect v-for="(c, k) in r[3]" :key="k" :x="r[0] + k * 12" :y="r[1]" width="12" :height="r[2]" :fill="c" />
              </template>
            </svg>
          </div>
        </div>
      </div>
      <div class="dfoot">
        <div class="frow">
          <label for="fname">File <u>n</u>ame:</label>
          <div class="combo">
            <input id="fname" v-model="fileName" type="text">
            <svg width="10" height="6"><path d="M.7.7L5 5 9.300.7" fill="none" stroke="#555" stroke-width="1.200" /></svg>
          </div>
          <div class="type">
            <select aria-label="File type"><option>Microsoft Excel Files (*.xlsx; *.xl</option></select>
            <svg width="10" height="6"><path d="M.7.7L5 5 9.300.7" fill="none" stroke="#555" stroke-width="1.200" /></svg>
          </div>
        </div>
        <div class="actions">
          <button class="primary"><span><u>O</u>pen</span></button>
          <button>Cancel</button>
        </div>
        <svg class="grip" width="9" height="9"><path d="M6 0h2v2H6zM3 3h2v2H3zM6 3h2v2H6zM0 6h2v2H0zM3 6h2v2H3zM6 6h2v2H6z" fill="#bfbfbf" /></svg>
      </div>
    </div>

    <svg class="marks" width="1420" height="810" aria-hidden="true">
      <g fill="none" stroke="#ff2010" stroke-width="3">
        <rect x="29.500" y="623.500" width="142" height="23" rx="2" />
        <rect x="1299.500" y="376.500" width="95" height="123" rx="2" />
        <rect x="1190.500" y="754.500" width="106" height="32" rx="2" />
      </g>
      <g fill="#ff2010">
        <path d="M19 500.500l2.500-1.500L98.500 613l.5-3 2 18.500-16-9 5.500-1z" />
        <path d="M154 637.500L1324 451l-3.500-4 17 6.500-13 10.500-1.500-4.500L154 639z" />
        <path d="M1345 472l2 .5L1254.500 751.500l4.500 1-12.500 12-3.500-17.500 4 2.500z" />
      </g>
    </svg>
  </div>
</template>

<style>
body { margin: 0; }
</style>

<style scoped>
* { box-sizing: border-box; }
.app { position: relative; display: flex; flex-direction: column; min-height: 100vh; background: #f0f0f0; color: #444; font: 12px/17px "Noto Sans", "Noto Sans CJK SC", sans-serif; }
h1, h2, h3, p, ul { margin: 0; padding: 0; font-weight: 400; }
button, input, select { font: inherit; color: inherit; padding: 0; margin: 0; }
svg { display: block; flex: none; }
.plain { display: flex; align-items: center; background: none; border: 0; }
.caret { flex: none; display: inline-block; border: 3px solid transparent; border-top: 3px solid currentColor; border-bottom: 0; }
.bar { width: 1px; background: #d6d6d6; }

.titlebar { display: flex; align-items: center; height: 34px; background: #2a579a; color: #fff; }
.quick { display: flex; align-items: center; gap: 10px; padding-left: 16px; width: 284px; }
.quick .caret { margin-left: 8px; }
.quick .near { margin-left: 4px; }
.quick .bar { height: 22px; }
.quick .dim { color: #b5c4dc; }
.trio { display: flex; gap: 14px; }
.titlebar h1 { flex: 1; text-align: center; font-size: 12px; color: #dfe6f0; }
.session { display: flex; align-items: center; }
.user { gap: 5px; margin-right: 8px; }
.avatar { width: 20px; height: 20px; border-radius: 50%; background: #1e7cff; font-size: 11px; line-height: 19px; text-align: center; }
.win { width: 36px; height: 34px; justify-content: center; }

.tabs { display: flex; gap: 30px; height: 38px; padding: 0 6px 0 13px; }
.tab { height: 35px; padding-top: 4px; border: 0; border-bottom: 3px solid transparent; background: none; }
.tab.active { font-weight: 700; border-color: #0b64c9; }
.find { margin-left: auto; display: flex; align-items: center; gap: 3px; height: 35px; }
.findbox { display: flex; align-items: center; width: 124px; height: 23px; border: 1px solid #c3c3c3; background: #fdfdfd; padding-right: 4px; }
.findbox input { flex: 1; min-width: 0; border: 0; background: none; outline: 0; }
.find .caret { margin-left: 3px; }
.find .bar { height: 13px; margin-left: 2px; }

.ribbon { display: flex; height: 99px; padding-bottom: 3px; border-bottom: 1px solid #cbcbcb; }
.group { display: flex; flex-direction: column; flex: none; border-right: 1px solid #d2d2d2; }
.tools { flex: 1; display: flex; justify-content: center; padding: 9px 0 0 2px; }
.tool { display: flex; flex-direction: column; align-items: center; border: 0; background: none; color: #adadad; }
.tool.on { color: #444; }
.tool svg { margin-bottom: 7px; }
.tool > .caret { margin-top: 6px; }
.cap { white-space: nowrap; }
.cap .caret { margin-left: 4px; vertical-align: 4px; }
.gname { position: relative; text-align: center; color: #666; height: 19px; }
.launcher { position: absolute; right: 7px; top: 5px; }

.work { flex: 1; display: flex; }
.strip { width: 30px; padding: 14px 0 0 2px; background: #eee; border-right: 1px solid #a5a5a5; }
.stab { display: flex; align-items: center; width: 27px; height: 30px; padding-left: 5px; border: 1px solid #b3b3b3; border-width: 0 0 1px 1px; border-top-left-radius: 5px; background: #e4e4e4; }
.stab:first-child { border-top-width: 1px; }
.stab.active { width: 28px; background: #f9f8f7; position: relative; }
.pane { display: flex; flex-direction: column; width: 300px; background: #f9f8f7; }
.pane-head { display: flex; align-items: center; justify-content: space-between; height: 38px; padding: 0 7px 2px 4px; background: #e4e4e4; }
.pane-head h2 { font-size: 22px; line-height: 30px; }
.pane-body { flex: 1; padding: 8px 8px 0; color: #000; border-bottom: 2px solid #b5b5b5; }
.pane-body h3 { padding: 0 2px 2px; border-bottom: 1px solid #999; font: 700 12px/18px "Liberation Sans", Arial, sans-serif; }
.about { padding: 13px 7px 0; font: 10px/14px "Liberation Mono", monospace; white-space: nowrap; }
.about p { margin-bottom: 12px; }
.sample { width: 196px; margin: -2px 0 32px; padding: 4px 3px; background: #fff; }
.sample table { width: 190px; table-layout: fixed; border-collapse: collapse; border: 2px solid #999; color: #111; }
.sample th, .sample td { height: 14px; padding: 0 0 0 6px; border: 1px solid #999; text-align: left; line-height: 13px; font-family: "Noto Sans", sans-serif; }
.sample th { height: 18px; font: 700 12px/18px "Liberation Sans", Arial, sans-serif; width: 73px; }
.sample th:last-child { width: auto; }
.radios { display: flex; flex-direction: column; gap: 10px; padding: 15px 5px; font: 10px/14px "Liberation Mono", monospace; }
.radios label { display: flex; align-items: center; gap: 4px; }
.off { color: #6b5f52; }
.radios input { appearance: none; width: 13px; height: 13px; border: 1px solid #333; border-radius: 50%; background: #fff; }
.radios input:checked { background: radial-gradient(circle, #333 3px, #fff 4px); }
.radios input:disabled { border-color: #ccc; }
.pane-foot { display: flex; justify-content: flex-end; padding: 8px 4px 10px; height: 46px; background: #fff; }
.next { width: 78px; height: 28px; border: 2px solid #0078d7; background: #e1e1e1; color: #000; font: 10px/14px "Liberation Mono", monospace; }
.splitter { width: 5px; background: linear-gradient(90deg, #e6e6e6 2px, #d4d4d4 2px); }
.canvas { flex: 1; background: #e5e5e5; }

.status { display: flex; align-items: center; height: 23px; border-top: 1px solid #c9c9c9; color: #999; font-size: 13px; }
.pen { margin: 0 4px 0 3px; }
.mouse { display: flex; justify-content: center; width: 22px; padding: 1px 0; background: #ccc; }
.trial { margin: 0 7px 0 18px; color: #111; }
.status a { color: #3560cf; font-weight: 700; }
.views { margin-left: auto; display: flex; gap: 8px; }
.views .caret { margin-left: 2px; }
.views .detail { margin-left: 8px; }
.zoom { margin: 0 14px 0 12px; }
.zoomer { display: flex; align-items: center; gap: 10px; margin-right: 10px; }
.zoomer input { appearance: none; width: 88px; height: 14px; background: linear-gradient(#aaa, #aaa) center / 100% 1px no-repeat; }
.zoomer input::-webkit-slider-thumb { appearance: none; width: 5px; height: 14px; background: #a0a0a0; }
.panel { margin: 0 2px 0 16px; }
.panel .caret { margin-left: 4px; color: #333; }

.dialog { position: absolute; left: 459px; top: 265px; width: 946px; display: flex; flex-direction: column; border: 1px solid #666; background: #fff; color: #000; box-shadow: 0 4px 14px rgba(0, 0, 0, .35); }
.dtitle { display: flex; align-items: center; gap: 5px; height: 28px; padding: 0 10px 0 8px; font-size: 13px; }
.dtitle button { margin-left: auto; }
.dnav { display: flex; align-items: center; height: 45px; padding: 0 12px 0 13px; }
.arrows { display: flex; align-items: center; justify-content: space-between; width: 86px; margin-right: 7px; }
.address { flex: 1; display: flex; align-items: center; height: 31px; gap: 11px; padding-left: 2px; border: 1px solid #d9d9d9; }
.address svg:first-child { margin-right: -3px; }
.address span + svg { margin-left: -2px; }
.drop { margin-left: auto !important; }
.refresh { display: flex; align-items: center; justify-content: center; width: 35px; height: 29px; border: 0; border-left: 1px solid #d9d9d9; background: none; }
.searchbox { display: flex; align-items: center; gap: 12px; width: 202px; height: 31px; margin-left: 12px; padding: 0 14px; border: 1px solid #d9d9d9; }
.searchbox input { flex: 1; min-width: 0; border: 0; outline: 0; }
.searchbox input::placeholder { color: #6d6d6d; opacity: 1; }
.dtools { display: flex; align-items: center; gap: 30px; height: 32px; padding: 0 15px 0 18px; background: #f5f6f8; border-bottom: 1px solid #e6e8ea; color: #1e395b; }
.dtools .caret { margin-left: 6px; border-width: 4px 4px 0; }
.dview { margin-left: auto; display: flex; align-items: center; gap: 20px; }
.dview .caret { margin-left: 11px; }
.dbody { display: flex; height: 350px; overflow: hidden; }
.tree { width: 140px; padding-top: 7px; list-style: none; }
.tree li { display: flex; align-items: center; gap: 5px; height: 24px; margin-right: 1px; padding-left: 32px; white-space: nowrap; }
.tree .root { padding-left: 24px; }
.tree .root + .root { margin-top: 8px; }
.tree .current { background: #d9d9d9; }
.tree .peek { height: 3px; margin-top: 12px; padding-left: 30px; }
.scroll { display: flex; flex-direction: column; justify-content: space-between; align-items: center; width: 16px; padding: 6px 0 5px; background: #f0f0f0; }
.thumb { width: 100%; height: 179px; margin-top: 101px; background: #cdcdcd; }
.files { flex: 1; display: flex; margin-left: 2px; padding: 13px 0 0 12px; border-left: 1px solid #f0f0f0; }
.file { position: relative; display: flex; flex-direction: column; align-items: center; width: 110px; }
.mosaic { position: absolute; top: 86px; left: 0; }
.fname { margin-top: 1px; }
.dfoot { position: relative; padding: 8px 17px 14px 0; background: #f0f0f0; font-size: 11px; }
.frow { display: flex; align-items: center; justify-content: flex-end; }
.combo { display: flex; align-items: center; width: 538px; height: 24px; margin: 0 12px 0 6px; padding: 0 4px; border: 1px solid #7a7a7a; background: #fff; }
.combo input { flex: 1; min-width: 0; border: 0; outline: 0; }
.type { position: relative; width: 188px; }
.type select { appearance: none; width: 100%; height: 24px; padding-left: 3px; border: 1px solid #adadad; border-radius: 0; background: #e1e1e1; color: #000; }
.type svg { position: absolute; right: 4px; top: 9px; }
.actions { display: flex; justify-content: flex-end; gap: 14px; margin-top: 6px; padding-right: 1px; }
.actions button { width: 86px; height: 24px; border: 1px solid #adadad; background: #e1e1e1; color: #000; }
.actions .primary { border: 2px solid #0078d7; }
.grip { position: absolute; right: 2px; bottom: 2px; }
.marks { position: absolute; left: 0; top: 0; pointer-events: none; }
</style>
